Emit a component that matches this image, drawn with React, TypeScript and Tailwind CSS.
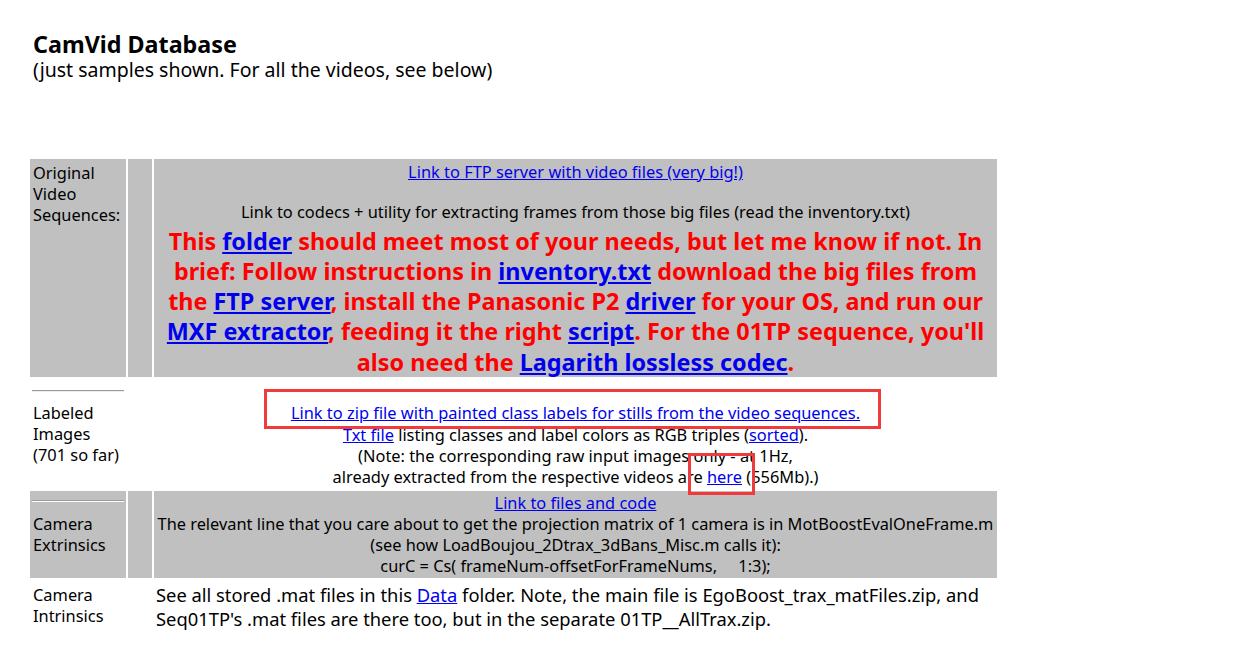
const font = { fontFamily: '"Noto Sans", "Open Sans", sans-serif' };

function A({ children }: { children: React.ReactNode }) {
  return <a href="#" className="text-[#0000ee] underline">{children}</a>;
}

export default function App() {
  return (
    <div className="relative min-h-[672px] bg-white text-black pl-[28px] pt-[30px]" style={font}>
      <div className="pl-[5px]">
        <h1 className="text-[23.3px] font-bold leading-[28px]">CamVid Database</h1>
        <p className="text-[19.5px] leading-[24px]">(just samples shown. For all the videos, see below)</p>
      </div>

      <table className="mt-[75px] border-separate border-spacing-[2px] text-[16.4px] leading-[21px]">
        <tbody>
          {/* Original video */}
          <tr>
            <td className="w-[96px] bg-[#c0c0c0] align-top px-[3px] pt-[2.5px]">
              Original Video Sequences:
            </td>
            <td className="w-[24px] bg-[#c0c0c0]"></td>
            <td className="w-[843px] bg-[#c0c0c0] align-top text-center px-[1px] pt-[2px]">
              <div><A>Link to FTP server with video files (very big!)</A></div>
              <div className="mt-[19px]">Link to codecs + utility for extracting frames from those big files (read the inventory.txt)</div>
              <p className="mt-[3.5px] text-[23.4px] leading-[30.25px] font-bold text-[#ff0000]">
                This <A>folder</A> should meet most of your needs, but let me know if not. In brief: Follow instructions in{" "}
                <A>inventory.txt</A> download the big files from the <A>FTP server</A>, install the Panasonic P2{" "}
                <A>driver</A> for your OS, and run our <A>MXF extractor</A>, feeding it the right <A>script</A>. For the
                01TP sequence, you'll also need the <A>Lagarith lossless codec</A>.
              </p>
            </td>
          </tr>

          {/* Labeled images */}
          <tr>
            <td className="align-top px-[2px] pt-[11px]">
              <div className="border-t border-t-[#9a9a9a] border-b border-b-[#eeeeee]"></div>
              <div className="mt-[10.5px] pl-[1px]">Labeled Images (701 so far)</div>
            </td>
            <td></td>
            <td className="align-top text-center leading-[21.3px] pt-[23.5px] pb-[2px]">
              <div><A>Link to zip file with painted class labels for stills from the video sequences.</A></div>
              <div><A>Txt file</A> listing classes and label colors as RGB triples (<A>sorted</A>).</div>
              <div>(Note: the corresponding raw input images only - at 1Hz,</div>
              <div>already extracted from the respective videos are <A>here</A> (556Mb).)</div>
            </td>
          </tr>

          {/* Extrinsics */}
          <tr>
            <td className="bg-[#c0c0c0] align-top px-[2px] pt-[9px]">
              <div className="border-t border-t-[#9a9a9a] border-b border-b-white"></div>
              <div className="mt-[10.5px] pl-[1px]">Camera Extrinsics</div>
            </td>
            <td className="bg-[#c0c0c0]"></td>
            <td className="bg-[#c0c0c0] align-top text-center text-[16.35px] pt-[1.5px] pb-[1px]">
              <div><A>Link to files and code</A></div>
              <div>The relevant line that you care about to get the projection matrix of 1 camera is in MotBoostEvalOneFrame.m</div>
              <div>(see how LoadBoujou_2Dtrax_3dBans_Misc.m calls it):</div>
              <div className="whitespace-pre">curC = Cs( frameNum-offsetForFrameNums,     1:3);</div>
            </td>
          </tr>

          {/* Intrinsics */}
          <tr>
            <td className="align-top px-[3px] pt-[4px]">Camera Intrinsics</td>
            <td></td>
            <td className="align-top text-left text-[18.35px] leading-[24px] px-[2px] pt-[3px]">
              See all stored .mat files in this <A>Data</A> folder. Note, the main file is EgoBoost_trax_matFiles.zip, and
              Seq01TP's .mat files are there too, but in the separate 01TP__AllTrax.zip.
            </td>
          </tr>
        </tbody>
      </table>

      {/* annotation boxes */}
      <div className="absolute left-[264px] top-[389px] w-[617px] h-[40px] border-[3px] border-[#ef3b3b]"></div>
      <div className="absolute left-[688px] top-[453px] w-[67px] h-[42px] border-[3px] border-[#ef3b3b]"></div>
    </div>
  );
}
